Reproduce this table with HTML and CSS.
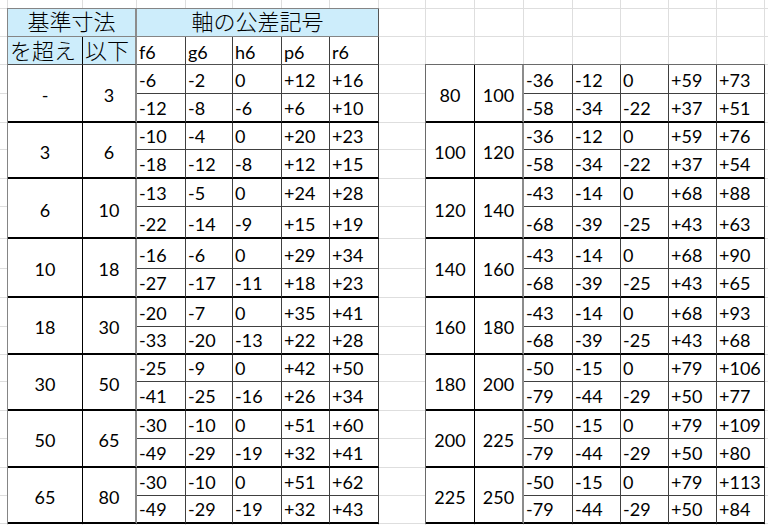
FILE: index.html
```html
<!DOCTYPE html>
<html lang="ja">
<head>
<meta charset="utf-8">
<title>軸の公差記号</title>
<link rel="stylesheet" href="styles.css">
</head>
<body>
<div class="sheet">
  <div class="tbl tbl-left">
    <div class="c h1 span2 k2">基準寸法</div>
    <div class="c h1 span5 e">軸の公差記号</div>
    <div class="c h2 k1">を超え</div>
    <div class="c h2 k2">以下</div>
    <div class="c hc">f6</div><div class="c hc">g6</div><div class="c hc">h6</div><div class="c hc">p6</div><div class="c hc e">r6</div>

    <div class="c m k1">-</div><div class="c m k2">3</div>
    <div class="c a">-6</div><div class="c a">-2</div><div class="c a">0</div><div class="c a">+12</div><div class="c a e">+16</div>
    <div class="c b">-12</div><div class="c b">-8</div><div class="c b">-6</div><div class="c b">+6</div><div class="c b e">+10</div>

    <div class="c m k1">3</div><div class="c m k2">6</div>
    <div class="c a">-10</div><div class="c a">-4</div><div class="c a">0</div><div class="c a">+20</div><div class="c a e">+23</div>
    <div class="c b">-18</div><div class="c b">-12</div><div class="c b">-8</div><div class="c b">+12</div><div class="c b e">+15</div>

    <div class="c m k1">6</div><div class="c m k2">10</div>
    <div class="c a">-13</div><div class="c a">-5</div><div class="c a">0</div><div class="c a">+24</div><div class="c a e">+28</div>
    <div class="c b">-22</div><div class="c b">-14</div><div class="c b">-9</div><div class="c b">+15</div><div class="c b e">+19</div>

    <div class="c m k1">10</div><div class="c m k2">18</div>
    <div class="c a">-16</div><div class="c a">-6</div><div class="c a">0</div><div class="c a">+29</div><div class="c a e">+34</div>
    <div class="c b">-27</div><div class="c b">-17</div><div class="c b">-11</div><div class="c b">+18</div><div class="c b e">+23</div>

    <div class="c m k1">18</div><div class="c m k2">30</div>
    <div class="c a">-20</div><div class="c a">-7</div><div class="c a">0</div><div class="c a">+35</div><div class="c a e">+41</div>
    <div class="c b">-33</div><div class="c b">-20</div><div class="c b">-13</div><div class="c b">+22</div><div class="c b e">+28</div>

    <div class="c m k1">30</div><div class="c m k2">50</div>
    <div class="c a">-25</div><div class="c a">-9</div><div class="c a">0</div><div class="c a">+42</div><div class="c a e">+50</div>
    <div class="c b">-41</div><div class="c b">-25</div><div class="c b">-16</div><div class="c b">+26</div><div class="c b e">+34</div>

    <div class="c m k1">50</div><div class="c m k2">65</div>
    <div class="c a">-30</div><div class="c a">-10</div><div class="c a">0</div><div class="c a">+51</div><div class="c a e">+60</div>
    <div class="c b">-49</div><div class="c b">-29</div><div class="c b">-19</div><div class="c b">+32</div><div class="c b e">+41</div>

    <div class="c m k1">65</div><div class="c m k2">80</div>
    <div class="c a">-30</div><div class="c a">-10</div><div class="c a">0</div><div class="c a">+51</div><div class="c a e">+62</div>
    <div class="c b">-49</div><div class="c b">-29</div><div class="c b">-19</div><div class="c b">+32</div><div class="c b e">+43</div>
  </div>

  <div class="tbl tbl-right">
    <div class="c m k1">80</div><div class="c m k2">100</div>
    <div class="c a">-36</div><div class="c a">-12</div><div class="c a">0</div><div class="c a">+59</div><div class="c a e">+73</div>
    <div class="c b">-58</div><div class="c b">-34</div><div class="c b">-22</div><div class="c b">+37</div><div class="c b e">+51</div>

    <div class="c m k1">100</div><div class="c m k2">120</div>
    <div class="c a">-36</div><div class="c a">-12</div><div class="c a">0</div><div class="c a">+59</div><div class="c a e">+76</div>
    <div class="c b">-58</div><div class="c b">-34</div><div class="c b">-22</div><div class="c b">+37</div><div class="c b e">+54</div>

    <div class="c m k1">120</div><div class="c m k2">140</div>
    <div class="c a">-43</div><div class="c a">-14</div><div class="c a">0</div><div class="c a">+68</div><div class="c a e">+88</div>
    <div class="c b">-68</div><div class="c b">-39</div><div class="c b">-25</div><div class="c b">+43</div><div class="c b e">+63</div>

    <div class="c m k1">140</div><div class="c m k2">160</div>
    <div class="c a">-43</div><div class="c a">-14</div><div class="c a">0</div><div class="c a">+68</div><div class="c a e">+90</div>
    <div class="c b">-68</div><div class="c b">-39</div><div class="c b">-25</div><div class="c b">+43</div><div class="c b e">+65</div>

    <div class="c m k1">160</div><div class="c m k2">180</div>
    <div class="c a">-43</div><div class="c a">-14</div><div class="c a">0</div><div class="c a">+68</div><div class="c a e">+93</div>
    <div class="c b">-68</div><div class="c b">-39</div><div class="c b">-25</div><div class="c b">+43</div><div class="c b e">+68</div>

    <div class="c m k1">180</div><div class="c m k2">200</div>
    <div class="c a">-50</div><div class="c a">-15</div><div class="c a">0</div><div class="c a">+79</div><div class="c a e">+106</div>
    <div class="c b">-79</div><div class="c b">-44</div><div class="c b">-29</div><div class="c b">+50</div><div class="c b e">+77</div>

    <div class="c m k1">200</div><div class="c m k2">225</div>
    <div class="c a">-50</div><div class="c a">-15</div><div class="c a">0</div><div class="c a">+79</div><div class="c a e">+109</div>
    <div class="c b">-79</div><div class="c b">-44</div><div class="c b">-29</div><div class="c b">+50</div><div class="c b e">+80</div>

    <div class="c m k1">225</div><div class="c m k2">250</div>
    <div class="c a">-50</div><div class="c a">-15</div><div class="c a">0</div><div class="c a">+79</div><div class="c a e">+113</div>
    <div class="c b">-79</div><div class="c b">-44</div><div class="c b">-29</div><div class="c b">+50</div><div class="c b e">+84</div>
  </div>
</div>
</body>
</html>
```

FILE: styles.css
```css
html {
  height: 100%;
  background-color: #ffffff;
  background-repeat: no-repeat;
  background-image:
    linear-gradient(#dedede, #dedede), linear-gradient(#dedede, #dedede),
    linear-gradient(#dedede, #dedede), linear-gradient(#dedede, #dedede),
    linear-gradient(#dedede, #dedede), linear-gradient(#dedede, #dedede),
    linear-gradient(#dedede, #dedede), linear-gradient(#dedede, #dedede),
    linear-gradient(#dedede, #dedede), linear-gradient(#dedede, #dedede),
    linear-gradient(#dedede, #dedede), linear-gradient(#dedede, #dedede),
    linear-gradient(#dedede, #dedede), linear-gradient(#dedede, #dedede),
    linear-gradient(#dedede, #dedede), linear-gradient(#dedede, #dedede),
    linear-gradient(#dedede, #dedede), linear-gradient(#dedede, #dedede),
    linear-gradient(#dedede, #dedede), linear-gradient(#dedede, #dedede),
    linear-gradient(#dedede, #dedede), linear-gradient(#dedede, #dedede),
    linear-gradient(#dedede, #dedede), linear-gradient(#dedede, #dedede),
    linear-gradient(#dedede, #dedede), linear-gradient(#dedede, #dedede),
    linear-gradient(#dedede, #dedede), linear-gradient(#dedede, #dedede),
    linear-gradient(#dedede, #dedede), linear-gradient(#dedede, #dedede),
    linear-gradient(#dedede, #dedede), linear-gradient(#dedede, #dedede),
    linear-gradient(#dedede, #dedede), linear-gradient(#dedede, #dedede),
    linear-gradient(#dedede, #dedede);
  background-size:
    1px 100%, 1px 100%, 1px 100%, 1px 100%, 1px 100%, 1px 100%, 1px 100%, 1px 100%,
    1px 100%, 1px 100%, 1px 100%, 1px 100%, 1px 100%, 1px 100%, 1px 100%, 1px 100%,
    100% 1px, 100% 1px, 100% 1px, 100% 1px, 100% 1px, 100% 1px, 100% 1px, 100% 1px,
    100% 1px, 100% 1px, 100% 1px, 100% 1px, 100% 1px, 100% 1px, 100% 1px, 100% 1px,
    100% 1px, 100% 1px, 100% 1px;
  background-position:
    7px 0, 82px 0, 136px 0, 185px 0, 232px 0, 281px 0, 329px 0, 378px 0,
    425px 0, 474px 0, 523px 0, 572px 0, 620px 0, 668px 0, 716px 0, 764px 0,
    0 8px, 0 36px, 0 64px, 0 93px, 0 122px, 0 149px, 0 178px, 0 206px,
    0 238px, 0 268px, 0 297px, 0 326px, 0 354px, 0 381px, 0 410px, 0 438px,
    0 467px, 0 495px, 0 523px;
}

body {
  margin: 0;
  padding: 8px 0 0 7px;
  font-family: Lato, "Noto Sans CJK JP", sans-serif;
  color: #000;
}

.sheet {
  display: flex;
  align-items: flex-start;
  gap: 46px;
}

.tbl {
  display: grid;
  background: #fff;
}

.tbl-left {
  grid-template-columns: 75px 54px 49px 47px 49px 48px 49px;
  grid-template-rows: 28px 28px 29px 29px 27px 29px 28px 32px 30px 29px 29px 28px 27px 29px 28px 29px 28px 28px;
  border-top: 1px solid #858585;
  border-left: 1px solid #858585;
}

.tbl-right {
  margin-top: 56px;
  grid-template-columns: 49px 49px 49px 48px 48px 48px 48px;
  grid-template-rows: 29px 29px 27px 29px 28px 32px 30px 29px 29px 28px 27px 29px 28px 29px 28px 28px;
  border-top: 1px solid #6a6a6a;
  border-left: 1px solid #6a6a6a;
}

.c {
  box-sizing: border-box;
  display: flex;
  align-items: flex-end;
  min-width: 0;
  white-space: nowrap;
  font-size: 18px;
  line-height: 18px;
  padding: 0 0 4px 2px;
  border-right: 1px solid #404040;
  border-bottom: 1px solid #404040;
}

.h1 {
  background: #cdedfb;
  justify-content: center;
  padding: 0 0 5px 0;
  font-family: "Noto Sans CJK JP", sans-serif;
  font-weight: 300;
  font-size: 22px;
  line-height: 22px;
  border-bottom-color: #858585;
}

.span2 { grid-column: span 2; }
.span5 { grid-column: span 5; }

.h2 {
  background: #cdedfb;
  padding: 0 0 4px 2px;
  font-family: "Noto Sans CJK JP", sans-serif;
  font-weight: 300;
  font-size: 22px;
  line-height: 22px;
  border-bottom-color: #505050;
}

.hc {
  padding-bottom: 3px;
  border-bottom-color: #505050;
}

.m {
  grid-row: span 2;
  justify-content: center;
  align-items: center;
  padding: 3px 0 0 0;
  border-bottom: 2px solid #000;
}

.k1 { border-right: 1px solid #000; }
.k2 { border-right: 2px solid #8c8c8c; }

.b { border-bottom: 2px solid #000; }

.e { border-right-color: #333; }
.h1.e { border-right-color: #555; }
```
